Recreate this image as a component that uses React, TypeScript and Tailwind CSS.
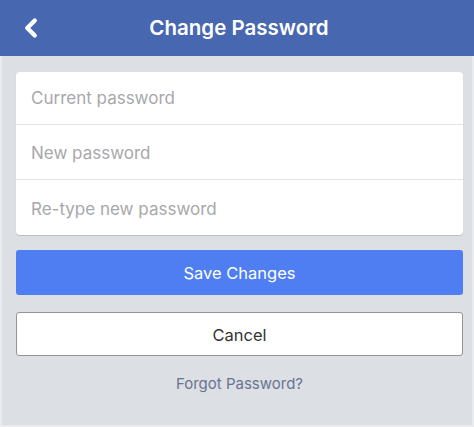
import { ChevronLeft } from 'lucide-react'

const font = { fontFamily: 'Inter, "Liberation Sans", Arial, sans-serif' }

function Field({ placeholder, className }: { placeholder: string; className: string }) {
  return (
    <div className={className}>
      <input
        type="password"
        placeholder={placeholder}
        className="w-full bg-transparent outline-none text-[17px] text-[#333] placeholder:text-[#a7a8ab]"
      />
    </div>
  )
}

export default function App() {
  return (
    <div className="w-[474px] h-[427px] flex flex-col bg-[#dcdfe4]" style={font}>
      {/* Header */}
      <div className="h-[56px] shrink-0 bg-[#4867b1] flex items-center relative">
        <button className="absolute left-[16px] top-[13px] text-white">
          <ChevronLeft className="w-[30px] h-[30px]" strokeWidth={3.5} />
        </button>
        <h1 className="w-full text-center text-white text-[20.5px] font-semibold pl-[4px]">Change Password</h1>
      </div>

      {/* Body */}
      <div className="flex-1 pl-[14px] pr-[9px] pt-[16px] border-x-2 border-b-2 border-[#e9ebee]">
        <div className="bg-white rounded-[4px] shadow-[0_1px_1px_rgba(0,0,0,0.15)]">
          <Field placeholder="Current password" className="h-[53px] flex items-center px-[15px] pt-[2px] border-b border-[#e4e5e8]" />
          <Field placeholder="New password" className="h-[55px] flex items-center px-[15px] pt-[4px] border-b border-[#e4e5e8]" />
          <Field placeholder="Re-type new password" className="h-[55px] flex items-center px-[15px] pt-[4px]" />
        </div>

        <button className="mt-[15px] w-full h-[45px] rounded-[3px] bg-[#4f7ef3] text-white text-[16.5px] pt-[2px]">
          Save Changes
        </button>

        <button className="mt-[17px] w-full h-[44px] rounded-[3px] bg-white border border-[#929498] text-[#333] text-[16.5px] pt-[2px]">
          Cancel
        </button>

        <div className="mt-[17px] text-center text-[15px] text-[#6a7491]">Forgot Password?</div>
      </div>
    </div>
  )
}
